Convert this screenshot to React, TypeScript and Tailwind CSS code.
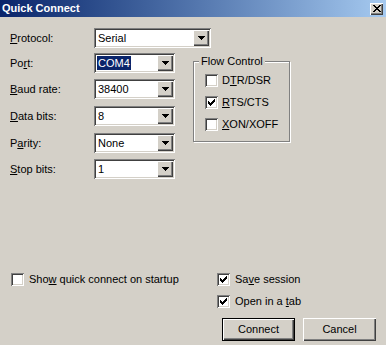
import type React from "react";

const raised =
  "shadow-[inset_1px_1px_0_#ffffff,inset_-1px_-1px_0_#404040,inset_-2px_-2px_0_#808080]";
const sunken =
  "shadow-[inset_1px_1px_0_#808080,inset_-1px_-1px_0_#ffffff,inset_2px_2px_0_#404040,inset_-2px_-2px_0_#d4d0c8]";

function Mn({ children }: { children: React.ReactNode }) {
  return <span className="underline underline-offset-[1px]">{children}</span>;
}

function Check({ checked }: { checked?: boolean }) {
  return (
    <div className={`w-[13px] h-[13px] shrink-0 bg-white ${sunken}`}>
      {checked && (
        <svg width="13" height="13" viewBox="0 0 13 13" shapeRendering="crispEdges">
          <path
            fill="#000"
            d="M3 5h1v3H3z M4 6h1v3H4z M5 7h1v3H5z M6 6h1v3H6z M7 5h1v3H7z M8 4h1v3H8z M9 3h1v3H9z"
          />
        </svg>
      )}
    </div>
  );
}

function Combo({
  value,
  width,
  selected,
}: {
  value: string;
  width: string;
  selected?: boolean;
}) {
  return (
    <div className={`${width} h-[20px] bg-white flex items-center p-[2px] ${sunken}`}>
      <div className="flex-1 flex items-center pl-[1px] h-full">
        {selected ? (
          <span className="bg-[#0a246a] text-white px-[1px] leading-[14px]">{value}</span>
        ) : (
          <span className="px-[1px]">{value}</span>
        )}
      </div>
      <div className={`w-[16px] h-[16px] bg-[#d4d0c8] flex items-center justify-center ${raised}`}>
        <svg width="7" height="4" viewBox="0 0 7 4" shapeRendering="crispEdges">
          <path fill="#000" d="M0 0h7v1H0z M1 1h5v1H1z M2 2h3v1H2z M3 3h1v1H3z" />
        </svg>
      </div>
    </div>
  );
}

function Row({
  label,
  children,
  className = "",
}: {
  label: React.ReactNode;
  children: React.ReactNode;
  className?: string;
}) {
  return (
    <div className={`flex items-center h-[20px] ${className}`}>
      <div className="w-[84px]">{label}</div>
      {children}
    </div>
  );
}

function Button({ label, isDefault }: { label: string; isDefault?: boolean }) {
  return (
    <div
      className={`w-[74px] h-[23px] bg-[#d4d0c8] ${isDefault ? "border border-black" : ""}`}
    >
      <div className={`w-full h-full flex items-center justify-center ${raised}`}>
        {label}
      </div>
    </div>
  );
}

export default function App() {
  return (
    <div
      className="w-[386px] h-[345px] bg-[#d4d0c8] text-black text-[11px] leading-[13px] overflow-hidden flex flex-col"
      style={{ fontFamily: '"Liberation Sans", Arial, sans-serif' }}
    >
      <div className="h-[17px] bg-gradient-to-r from-[#0a246a] to-[#a6caf0] flex items-center justify-between pl-[2px] pr-[3px]">
        <span className="text-white font-bold">Quick Connect</span>
        <div className={`w-[13px] h-[12px] bg-[#d4d0c8] flex items-center justify-center ${raised}`}>
          <svg width="8" height="7" viewBox="0 0 8 7" shapeRendering="crispEdges">
            <path
              fill="#000"
              d="M0 0h2v1H0z M6 0h2v1H6z M1 1h2v1H1z M5 1h2v1H5z M2 2h4v1H2z M3 3h2v1H3z M2 4h4v1H2z M1 5h2v1H1z M5 5h2v1H5z M0 6h2v1H0z M6 6h2v1H6z"
            />
          </svg>
        </div>
      </div>

      <div className="px-[10px]">
        <Row label={<><Mn>P</Mn>rotocol:</>} className="mt-[11px]">
          <Combo value="Serial" width="w-[117px]" />
        </Row>

        <div className="flex mt-[5px]">
          <div className="w-[165px]">
            <Row label={<>Po<Mn>r</Mn>t:</>}>
              <Combo value="COM4" width="w-[81px]" selected />
            </Row>
            <Row label={<><Mn>B</Mn>aud rate:</>} className="mt-[6px]">
              <Combo value="38400" width="w-[81px]" />
            </Row>
            <Row label={<><Mn>D</Mn>ata bits:</>} className="mt-[7px]">
              <Combo value="8" width="w-[81px]" />
            </Row>
            <Row label={<>P<Mn>a</Mn>rity:</>} className="mt-[7px]">
              <Combo value="None" width="w-[81px]" />
            </Row>
            <Row label={<><Mn>S</Mn>top bits:</>} className="mt-[6px]">
              <Combo value="1" width="w-[81px]" />
            </Row>
          </div>

          <div className="relative ml-[18px] mt-[8px] w-[97px] h-[81px] border border-[#808080] shadow-[1px_1px_0_#ffffff,inset_1px_1px_0_#ffffff]">
            <span className="absolute top-[-7px] left-[5px] px-[2px] bg-[#d4d0c8]">
              Flow Control
            </span>
            <div className="flex flex-col gap-[9px] pt-[12px] pl-[11px]">
              <div className="flex items-center h-[13px]">
                <Check />
                <span className="ml-[4px]">D<Mn>T</Mn>R/DSR</span>
              </div>
              <div className="flex items-center h-[13px]">
                <Check checked />
                <span className="ml-[4px]"><Mn>R</Mn>TS/CTS</span>
              </div>
              <div className="flex items-center h-[13px]">
                <Check />
                <span className="ml-[4px]"><Mn>X</Mn>ON/XOFF</span>
              </div>
            </div>
          </div>
        </div>

        <div className="flex items-center h-[13px] mt-[94px]">
          <div className="w-[207px] flex items-center pl-[1px]">
            <Check />
            <span className="ml-[5px]">Sho<Mn>w</Mn> quick connect on startup</span>
          </div>
          <Check checked />
          <span className="ml-[5px]">Sa<Mn>v</Mn>e session</span>
        </div>

        <div className="flex items-center h-[13px] mt-[9px] pl-[207px]">
          <Check checked />
          <span className="ml-[5px]">Open in a <Mn>t</Mn>ab</span>
        </div>

        <div className="flex gap-[8px] mt-[10px] pl-[212px]">
          <Button label="Connect" isDefault />
          <Button label="Cancel" />
        </div>
      </div>
    </div>
  );
}
